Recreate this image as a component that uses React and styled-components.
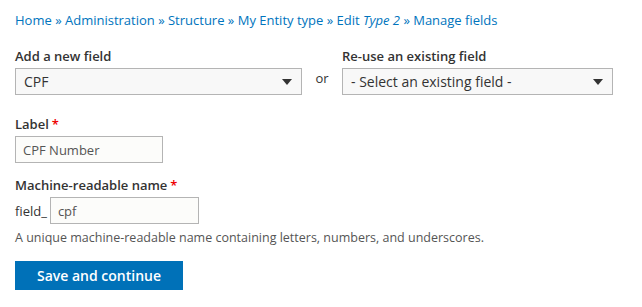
import React from "react";
import styled, { createGlobalStyle } from "styled-components";

const Global = createGlobalStyle`
  html, body { margin: 0; padding: 0; background: #fff; }
  body { font-family: "Open Sans", "Liberation Sans", sans-serif; color: #333; }
`;

const Page = styled.div`
  padding: 11px 15px 0 15px;
  font-size: 13px;
`;

const Breadcrumb = styled.nav`
  font-size: 13px;
  line-height: 18px;
  color: #0074bd;
  margin-bottom: 18px;
  a { color: #0074bd; text-decoration: none; }
  em { font-style: italic; }
`;

const Row = styled.div`
  display: flex;
  align-items: flex-start;
`;

const FieldGroup = styled.div`
  display: flex;
  flex-direction: column;
  margin-top: ${(p) => p.$mt || 0}px;
`;

const Label = styled.label`
  font-size: 13px;
  font-weight: 600;
  line-height: 18px;
  color: #333;
  margin-bottom: 3px;
`;

const Star = styled.span`
  color: #e00;
  margin-left: 3px;
`;

const SelectBox = styled.div`
  box-sizing: border-box;
  width: ${(p) => p.$w}px;
  height: 27px;
  border: 1px solid #b4b4b4;
  background: #f8f8f8;
  display: flex;
  align-items: center;
  justify-content: space-between;
  padding: 0 9px 0 8px;
  font-size: 14px;
  color: #333;
`;

const Arrow = styled.span`
  width: 0;
  height: 0;
  border-left: 5px solid transparent;
  border-right: 5px solid transparent;
  border-top: 6px solid #333;
`;

const Or = styled.div`
  width: 40px;
  text-align: center;
  padding-top: 22px;
  font-size: 13px;
  color: #333;
`;

const Input = styled.div`
  box-sizing: border-box;
  width: ${(p) => p.$w}px;
  height: 27px;
  border: 1px solid #b4b4b4;
  background: #fcfcfa;
  display: flex;
  align-items: center;
  padding: 0 7px;
  font-size: 13px;
  color: #555;
`;

const Prefix = styled.div`
  display: flex;
  align-items: center;
  gap: 3px;
  font-size: 13px;
  color: #333;
`;

const Description = styled.div`
  font-size: 12.5px;
  line-height: 17px;
  color: #555;
  margin-top: 5px;
`;

const Button = styled.button`
  font-family: inherit;
  background: #0071b8;
  color: #fff;
  border: none;
  font-size: 14px;
  font-weight: 600;
  height: 29px;
  width: 168px;
  padding: 0;
  cursor: pointer;
  align-self: flex-start;
  margin-top: 15px;
`;

export default function App() {
  return (
    <>
      <Global />
      <Page>
        <Breadcrumb>
          <a>Home</a> » <a>Administration</a> » <a>Structure</a> » <a>My Entity type</a> » <a>Edit <em>Type 2</em></a> » <a>Manage fields</a>
        </Breadcrumb>
        <Row>
          <FieldGroup>
            <Label>Add a new field</Label>
            <SelectBox $w={287}>
              <span>CPF</span>
              <Arrow />
            </SelectBox>
          </FieldGroup>
          <Or>or</Or>
          <FieldGroup>
            <Label>Re-use an existing field</Label>
            <SelectBox $w={271}>
              <span>- Select an existing field -</span>
              <Arrow />
            </SelectBox>
          </FieldGroup>
        </Row>
        <FieldGroup $mt={20}>
          <Label>Label<Star>*</Star></Label>
          <Input $w={148}>CPF Number</Input>
        </FieldGroup>
        <FieldGroup $mt={13}>
          <Label>Machine-readable name<Star>*</Star></Label>
          <Prefix>
            field_
            <Input $w={149}>cpf</Input>
          </Prefix>
          <Description>A unique machine-readable name containing letters, numbers, and underscores.</Description>
          <Button>Save and continue</Button>
        </FieldGroup>
      </Page>
    </>
  );
}
